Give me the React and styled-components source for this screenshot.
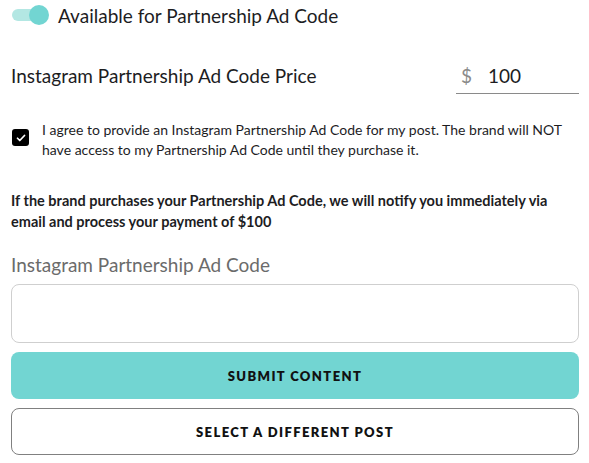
import React from "react";
import styled, { createGlobalStyle } from "styled-components";

const Global = createGlobalStyle`
  body {
    margin: 0;
    background: #fff;
    font-family: "Lato", "Open Sans", sans-serif;
    color: #1d1d1f;
  }
`;

const Page = styled.div`
  width: 589px;
  padding: 0 10px 0 11px;
  box-sizing: border-box;
  display: flex;
  flex-direction: column;
`;

const ToggleRow = styled.label`
  display: flex;
  align-items: center;
  gap: 9px;
  height: 30px;
  padding-left: 12px;
  margin-left: -11px;
  font-size: 19px;
`;

const Switch = styled.span`
  position: relative;
  width: 37px;
  height: 20px;
  display: inline-block;
`;

const Track = styled.span`
  position: absolute;
  left: 0;
  top: 4px;
  width: 32px;
  height: 12px;
  border-radius: 6px;
  background: #b3e7e3;
`;

const Thumb = styled.span`
  position: absolute;
  right: 0;
  top: 0;
  width: 20px;
  height: 20px;
  border-radius: 50%;
  background: #72d5d2;
`;

const PriceRow = styled.div`
  display: flex;
  align-items: center;
  justify-content: space-between;
  margin-top: 27px;
`;

const Label = styled.span`
  font-size: 19px;
  color: ${(p) => p.$muted ? "#6b6b6b" : "#1d1d1f"};
`;

const PriceBox = styled.div`
  width: 123px;
  height: 37px;
  border-bottom: 1px solid #8a8a8a;
  display: flex;
  align-items: center;
  gap: 16px;
  padding-left: 5px;
  box-sizing: border-box;
  font-size: 19px;
`;

const Dollar = styled.span`
  color: #8a8a8a;
`;

const AgreeRow = styled.label`
  display: flex;
  gap: 13px;
  margin-top: 26px;
  padding-left: 1px;
  font-size: 14px;
  line-height: 20px;
`;

const Box = styled.span`
  flex: none;
  width: 17px;
  height: 17px;
  border-radius: 3px;
  background: #000;
  margin-top: 9px;
  display: flex;
  align-items: center;
  justify-content: center;
`;

const Notice = styled.p`
  margin: 30px 0 0;
  font-size: 14.5px;
  font-weight: 700;
  line-height: 21px;
`;

const CodeLabel = styled(Label)`
  margin-top: 21px;
`;

const CodeInput = styled.div`
  margin-top: 8px;
  height: 59px;
  border: 1px solid #cfcfcf;
  border-radius: 8px;
  box-sizing: border-box;
`;

const Button = styled.button`
  height: 47px;
  margin-top: 9px;
  border-radius: 8px;
  border: ${(p) => p.$primary ? "none" : "1px solid #808080"};
  background: ${(p) => p.$primary ? "#72d5d2" : "#fff"};
  font-family: "Lato", sans-serif;
  font-weight: 800;
  font-size: 13px;
  letter-spacing: 1.4px;
  color: #111;
  text-transform: uppercase;
`;

export default function App() {
  return (
    <Page>
      <Global />
      <ToggleRow>
        <Switch>
          <Track />
          <Thumb />
        </Switch>
        Available for Partnership Ad Code
      </ToggleRow>
      <PriceRow>
        <Label>Instagram Partnership Ad Code Price</Label>
        <PriceBox>
          <Dollar>$</Dollar>
          <span>100</span>
        </PriceBox>
      </PriceRow>
      <AgreeRow>
        <Box>
          <svg width="12" height="12" viewBox="0 0 24 24" fill="none" stroke="#fff" strokeWidth="3.5" strokeLinecap="round" strokeLinejoin="round">
            <path d="M5 12.5l4.5 4.5L19 7" />
          </svg>
        </Box>
        <span>
          I agree to provide an Instagram Partnership Ad Code for my post. The brand will NOT have access to my Partnership Ad Code until they purchase it.
        </span>
      </AgreeRow>
      <Notice>
        If the brand purchases your Partnership Ad Code, we will notify you immediately via email and process your payment of $100
      </Notice>
      <CodeLabel $muted>Instagram Partnership Ad Code</CodeLabel>
      <CodeInput />
      <Button $primary>Submit Content</Button>
      <Button>Select a different post</Button>
    </Page>
  );
}
